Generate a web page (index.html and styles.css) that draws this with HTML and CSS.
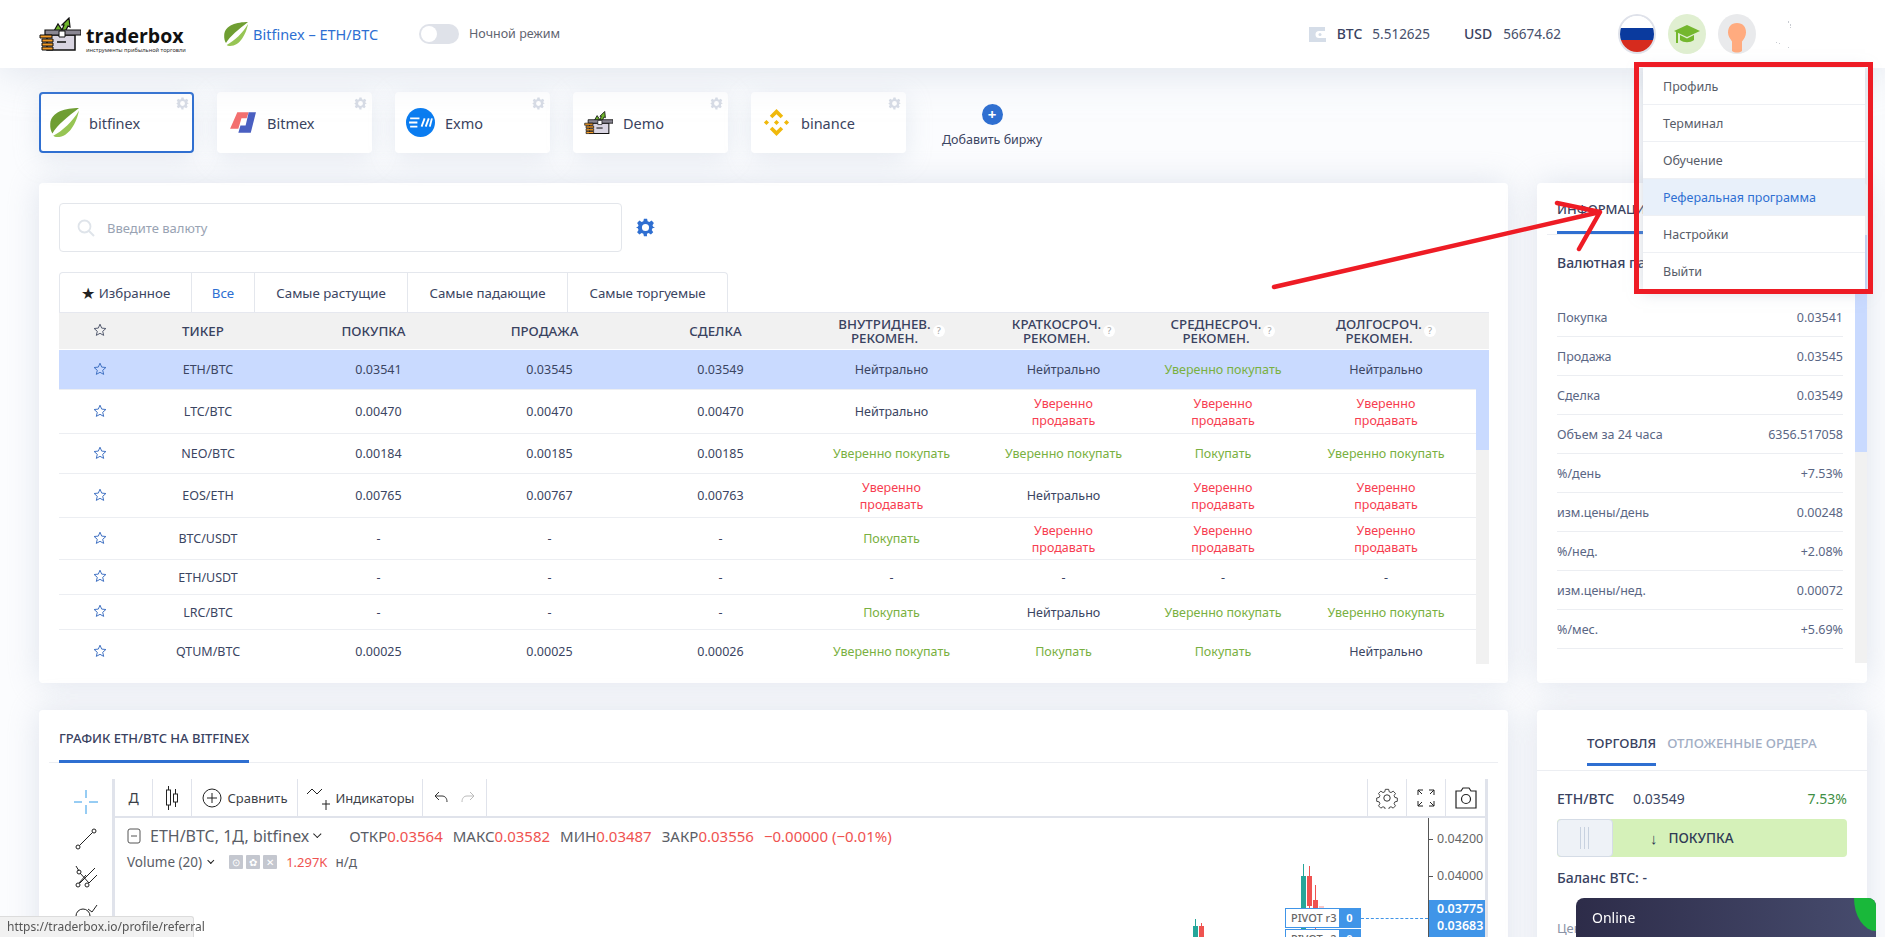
FILE: index.html
```html
<!DOCTYPE html>
<html lang="ru">
<head>
<meta charset="utf-8">
<title>Traderbox</title>
<link rel="stylesheet" href="styles.css">
</head>
<body>
<svg class="defs" width="0" height="0">
  <symbol id="leaf" viewBox="0 0 24 24">
    <path fill="#6f9e32" d="M24 0C13 0 1 3 .2 13c-.2 3.500.5 6 1.800 8 4-7 13-14 22-21z"/>
    <path fill="#97c554" d="M24 2C22 12 16 24 6 24c-1.500 0-2.500-.3-3.300-1C10 19 19 11 24 2z"/>
  </symbol>
  <symbol id="box" viewBox="0 0 42 34">
    <path fill="#6fb52c" stroke="#111" stroke-width="1.200" d="M15 14l4-7 4 6 2-5-2 0 7-7 1 9-2-1-4 8z"/>
    <path fill="#d9d5e2" stroke="#111" stroke-width="1.500" d="M8 18h28v15H8z"/>
    <path fill="#8a8793" stroke="#111" stroke-width="1.200" d="M6 13h36v5H6z"/>
    <path fill="#fff" stroke="#111" d="M20 14h6v6h-6z"/>
    <path fill="#f39a26" stroke="#111" d="M1 18h12v3H1zM3 22h11v3H3zM3 26h11v3H3zM3 30h11v3H3z"/>
    <path stroke="#111" stroke-width="1.500" d="M18 25h9"/>
  </symbol>
  <symbol id="gear" viewBox="0 0 24 24">
    <path fill="currentColor" fill-rule="evenodd" d="M10 1h4l.7 3.200 2.200.9L19.700 3.300l2.900 2.900-1.800 2.800.9 2.200L24 12l-3.200 1-.9 2.100 1.800 2.800-2.900 2.900-2.800-1.800-2.200.9L14 23h-4l-.7-3.100-2.200-.9-2.800 1.800-2.900-2.900L3.200 15l-.9-2.100L0 12l2.300-.8.9-2.200L1.400 6.200l2.900-2.900 2.800 1.800 2.200-.9zM12 7.500a4.500 4.500 0 100 9 4.500 4.500 0 000-9z"/>
  </symbol>
  <symbol id="star" viewBox="0 0 14 14">
    <path fill="none" stroke="currentColor" d="M7 1.200l1.700 3.900 4.200.4-3.200 2.800 1 4.100L7 10.300 3.300 12.400l1-4.100L1.100 5.500l4.200-.4z"/>
  </symbol>
</svg>

<header class="topbar">
  <div class="logo">
    <svg class="logo-icon"><use href="#box"/></svg>
    <div class="logo-text"><b>traderbox</b><small>инструменты прибыльной торговли</small></div>
  </div>
  <div class="pair">
    <svg class="pair-leaf"><use href="#leaf"/></svg>
    <span>Bitfinex – ETH/BTC</span>
  </div>
  <div class="switch"><i></i></div>
  <span class="night">Ночной режим</span>
  <div class="balances">
    <svg class="wallet" viewBox="0 0 18 15"><path fill="#d5dde8" d="M0 0h16v4H10a3.500 3.500 0 000 7h7v4H0z"/><circle cx="11" cy="7.500" r="1.500" fill="#d5dde8"/></svg>
    <b class="cur">BTC</b><span class="val">5.512625</span>
    <b class="cur usd">USD</b><span class="val">56674.62</span>
  </div>
  <div class="round flag"><i class="f1"></i><i class="f2"></i><i class="f3"></i></div>
  <div class="round cap">
    <svg viewBox="0 0 26 24" width="26" height="24"><path fill="#74b72e" d="M13 3L26 9l-13 6L0 9z"/><path fill="#74b72e" d="M6 13l7 3.500 7-3.500v5c-4 3-10 3-14 0z"/><path stroke="#74b72e" stroke-width="2" d="M3 10v11"/></svg>
  </div>
  <div class="round person">
    <svg viewBox="0 0 22 32" width="22" height="32"><path fill="#ffab7f" d="M11 1c6 0 9 4 9 9.500 0 3.500-2 6.500-4 9V29c-3 2-7 2-10 0v-9.500c-2-3-4-5.500-4-9C2 5 5 1 11 1z"/></svg>
  </div>
  <svg class="specks" viewBox="0 0 16 30" width="16" height="30"><path fill="#c9ccd2" d="M12 2h1v2h-1zM14 5h1v2h-1zM14 8h1v1h-1zM0 23h1v1H0zM3 24h1v1H3zM12 28h1v1h-1z"/></svg>
</header>

<main class="page">
  <section class="exchanges">
    <div class="ex active"><svg class="ex-ic"><use href="#leaf"/></svg><span>bitfinex</span><svg class="ex-gear"><use href="#gear"/></svg></div>
    <div class="ex">
      <svg class="ex-ic" viewBox="0 0 28 28"><path fill="#f36f6f" d="M9 4h11l-2 6h-5l-3 10H2z"/><path fill="#4a5fc1" d="M27 4l-5 20H10l2-7h5l3-13z"/></svg>
      <span>Bitmex</span><svg class="ex-gear"><use href="#gear"/></svg></div>
    <div class="ex">
      <svg class="ex-ic" viewBox="0 0 28 28"><circle cx="14" cy="14" r="14" fill="#0a7cf0"/><path stroke="#fff" stroke-width="1.800" fill="none" d="M4 10h9M3 14h8M4 18h7M15 18l3-8M19 18l3-8M23 18l2-8"/></svg>
      <span>Exmo</span><svg class="ex-gear"><use href="#gear"/></svg></div>
    <div class="ex"><svg class="ex-ic"><use href="#box"/></svg><span>Demo</span><svg class="ex-gear"><use href="#gear"/></svg></div>
    <div class="ex">
      <svg class="ex-ic" viewBox="2 0 24 26"><path fill="#f0b90b" d="M14 1l6 6-2.300 2.300L14 5.600l-3.700 3.700L8 7zM5 10.700L7.300 13 5 15.300 2.700 13zM23 10.700L25.300 13 23 15.300 20.700 13zM14 10.700l2.300 2.300L14 15.300 11.700 13zM8 19l2.300-2.300 3.700 3.700 3.700-3.700L20 19l-6 6z"/></svg>
      <span>binance</span><svg class="ex-gear"><use href="#gear"/></svg></div>
    <div class="add"><i>+</i><span>Добавить биржу</span></div>
  </section>

  <section class="row-top">
    <div class="card market">
      <div class="search-row">
        <div class="search">
          <svg viewBox="0 0 18 18" width="18" height="18"><circle cx="7.500" cy="7.500" r="6" fill="none" stroke="#dfe4ea" stroke-width="1.800"/><path stroke="#dfe4ea" stroke-width="2" d="M12 12l5 5"/></svg>
          <span>Введите валюту</span>
        </div>
        <svg class="search-gear"><use href="#gear"/></svg>
      </div>
      <div class="tabs">
        <div class="tab t1"><em>★</em> Избранное</div>
        <div class="tab t2 on">Все</div>
        <div class="tab t3">Самые растущие</div>
        <div class="tab t4">Самые падающие</div>
        <div class="tab t5">Самые торгуемые</div>
      </div>
      <div class="thead tr">
        <div class="c-star"><svg class="star dark"><use href="#star"/></svg></div>
        <div class="c-tick">ТИКЕР</div>
        <div class="hn">ПОКУПКА</div><div class="hn">ПРОДАЖА</div><div class="hn">СДЕЛКА</div>
        <div class="hq"><span>ВНУТРИДНЕВ.<br>РЕКОМЕН.</span><i>?</i></div>
        <div class="hq"><span>КРАТКОСРОЧ.<br>РЕКОМЕН.</span><i>?</i></div>
        <div class="hq"><span>СРЕДНЕСРОЧ.<br>РЕКОМЕН.</span><i>?</i></div>
        <div class="hq"><span>ДОЛГОСРОЧ.<br>РЕКОМЕН.</span><i>?</i></div>
      </div>
      <div class="tbody">
        <div class="rows">
          <div class="tr h40 sel"><div class="c-star"><svg class="star"><use href="#star"/></svg></div><div class="c-tick">ETH/BTC</div><div>0.03541</div><div>0.03545</div><div>0.03549</div><div>Нейтрально</div><div>Нейтрально</div><div class="g">Уверенно покупать</div><div>Нейтрально</div></div>
          <div class="tr h44"><div class="c-star"><svg class="star"><use href="#star"/></svg></div><div class="c-tick">LTC/BTC</div><div>0.00470</div><div>0.00470</div><div>0.00470</div><div>Нейтрально</div><div class="r">Уверенно<br>продавать</div><div class="r">Уверенно<br>продавать</div><div class="r">Уверенно<br>продавать</div></div>
          <div class="tr h40"><div class="c-star"><svg class="star"><use href="#star"/></svg></div><div class="c-tick">NEO/BTC</div><div>0.00184</div><div>0.00185</div><div>0.00185</div><div class="g">Уверенно покупать</div><div class="g">Уверенно покупать</div><div class="g">Покупать</div><div class="g">Уверенно покупать</div></div>
          <div class="tr h44"><div class="c-star"><svg class="star"><use href="#star"/></svg></div><div class="c-tick">EOS/ETH</div><div>0.00765</div><div>0.00767</div><div>0.00763</div><div class="r">Уверенно<br>продавать</div><div>Нейтрально</div><div class="r">Уверенно<br>продавать</div><div class="r">Уверенно<br>продавать</div></div>
          <div class="tr h42"><div class="c-star"><svg class="star"><use href="#star"/></svg></div><div class="c-tick">BTC/USDT</div><div>-</div><div>-</div><div>-</div><div class="g">Покупать</div><div class="r">Уверенно<br>продавать</div><div class="r">Уверенно<br>продавать</div><div class="r">Уверенно<br>продавать</div></div>
          <div class="tr h35"><div class="c-star"><svg class="star"><use href="#star"/></svg></div><div class="c-tick">ETH/USDT</div><div>-</div><div>-</div><div>-</div><div>-</div><div>-</div><div>-</div><div>-</div></div>
          <div class="tr h35"><div class="c-star"><svg class="star"><use href="#star"/></svg></div><div class="c-tick">LRC/BTC</div><div>-</div><div>-</div><div>-</div><div class="g">Покупать</div><div>Нейтрально</div><div class="g">Уверенно покупать</div><div class="g">Уверенно покупать</div></div>
          <div class="tr h44"><div class="c-star"><svg class="star"><use href="#star"/></svg></div><div class="c-tick">QTUM/BTC</div><div>0.00025</div><div>0.00025</div><div>0.00026</div><div class="g">Уверенно покупать</div><div class="g">Покупать</div><div class="g">Покупать</div><div>Нейтрально</div></div>
        </div>
        <div class="scroll"><i></i></div>
      </div>
    </div>

    <div class="card info">
      <div class="info-tab"><span>ИНФОРМАЦИЯ</span></div>
      <div class="info-body">
        <div class="info-list">
          <h4>Валютная пара</h4>
          <div class="kv"><span>Покупка</span><span>0.03541</span></div>
          <div class="kv"><span>Продажа</span><span>0.03545</span></div>
          <div class="kv"><span>Сделка</span><span>0.03549</span></div>
          <div class="kv"><span>Объем за 24 часа</span><span>6356.517058</span></div>
          <div class="kv"><span>%/день</span><span>+7.53%</span></div>
          <div class="kv"><span>изм.цены/день</span><span>0.00248</span></div>
          <div class="kv"><span>%/нед.</span><span>+2.08%</span></div>
          <div class="kv"><span>изм.цены/нед.</span><span>0.00072</span></div>
          <div class="kv"><span>%/мес.</span><span>+5.69%</span></div>
        </div>
        <div class="scroll info-scroll"><i></i></div>
      </div>
    </div>
  </section>

  <section class="row-bottom">
    <div class="card chart">
      <div class="chart-title"><span>ГРАФИК ETH/BTC НА BITFINEX</span></div>
      <div class="chart-body">
        <div class="tools">
          <svg viewBox="0 0 24 24" width="24" height="24"><path stroke="#2f9ae8" d="M12 0v8M12 15v9M0 12h8M15 12h9" fill="none"/></svg>
          <svg viewBox="0 0 24 24" width="24" height="24" fill="none" stroke="#222"><circle cx="20" cy="4" r="2"/><circle cx="4" cy="20" r="2"/><path d="M5.500 18.500l13-13"/></svg>
          <svg viewBox="0 0 24 24" width="24" height="24" fill="none" stroke="#222"><circle cx="4" cy="21" r="2"/><circle cx="13" cy="21" r="2"/><circle cx="5" cy="8" r="2"/><path d="M6 19L21 4M15 19l8-8M6 9l9 10M2 2l3 5M5 19l7-8"/></svg>
          <svg viewBox="0 0 24 24" width="24" height="24" fill="none" stroke="#222"><circle cx="9" cy="15" r="7"/><path d="M14 8l4 3 5-7"/></svg>
        </div>
        <div class="plot">
          <div class="tv-bar">
            <div class="tv-i w-d">Д</div>
            <div class="tv-i w-c"><svg viewBox="0 0 16 24" width="16" height="24" fill="none" stroke="#222"><path d="M4.500 0v24M11.500 3v18"/><rect x="2.500" y="4" width="4" height="15" fill="#fff"/><rect x="9.500" y="8" width="4" height="8" fill="#fff"/></svg></div>
            <div class="tv-i w-s"><svg viewBox="0 0 20 20" width="20" height="20" fill="none" stroke="#222"><circle cx="10" cy="10" r="9"/><path d="M10 5v10M5 10h10"/></svg><span>Сравнить</span></div>
            <div class="tv-i w-n"><svg viewBox="0 0 24 24" width="24" height="24" fill="none" stroke="#222"><path d="M1 8l5-5 5 5 5-5M16 18h8M20 14v10"/></svg><span>Индикаторы</span></div>
            <div class="tv-i w-u"><svg viewBox="0 0 16 16" width="16" height="16" fill="none" stroke="#333"><path d="M6 2L2 6l4 4M2 6h7c3 0 5 2 5 6"/></svg><svg viewBox="0 0 16 16" width="16" height="16" fill="none" stroke="#bbb"><path d="M10 2l4 4-4 4M14 6H7c-3 0-5 2-5 6"/></svg></div>
            <div class="tv-space"></div>
            <div class="tv-i w-r"><svg viewBox="0 0 24 24" width="22" height="22" fill="none" stroke="#222"><path d="M10 1.500h4l.7 3 2.200.9 2.600-1.700 2.800 2.800-1.700 2.600.9 2.200 3 .7v4l-3 .7-.9 2.200 1.700 2.600-2.800 2.800-2.600-1.700-2.200.9-.7 3h-4l-.7-3-2.200-.9-2.600 1.700-2.800-2.800 1.700-2.600-.9-2.200-3-.7v-4l3-.7.9-2.200-1.700-2.600 2.800-2.800 2.600 1.700 2.200-.9z" transform="translate(1.200 1.200) scale(.9)"/><circle cx="12" cy="12" r="3.500"/></svg></div>
            <div class="tv-i w-r"><svg viewBox="0 0 18 18" width="18" height="18" fill="none" stroke="#222"><path d="M1 6V1h5M12 1h5v5M17 12v5h-5M6 17H1v-5M1 1l4 4M17 1l-4 4M17 17l-4-4M1 17l4-4"/></svg></div>
            <div class="tv-i w-r last"><svg viewBox="0 0 22 22" width="22" height="22" fill="none" stroke="#222" stroke-width="1.200"><path d="M1 4h5l2-3h6l2 3h5v17H1z"/><circle cx="11" cy="12" r="4.500"/></svg></div>
          </div>
          <div class="canvas">
            <div class="legend">
              <div class="leg1">
                <svg viewBox="0 0 14 16" width="14" height="16" fill="none" stroke="#555"><rect x="1" y="1" width="12" height="14" rx="2"/><path d="M4 8h6"/></svg>
                <span class="sym">ETH/BTC, 1Д, bitfinex</span><span class="chev"></span>
                <span class="ohlc">ОТКР<u>0.03564</u></span><span class="ohlc">МАКС<u>0.03582</u></span><span class="ohlc">МИН<u>0.03487</u></span><span class="ohlc">ЗАКР<u>0.03556</u></span><span class="ohlc"><u>−0.00000 (−0.01%)</u></span>
              </div>
              <div class="leg2">
                <span class="vol">Volume (20)</span><span class="chev small"></span>
                <i class="mini">⊙</i><i class="mini">✿</i><i class="mini">✕</i>
                <u>1.297K</u><span class="nd">н/д</span>
              </div>
            </div>
            <svg class="candles" viewBox="0 0 200 130" width="200" height="130">
              <path stroke="#26a69a" d="M179.500 46v70M71.500 101v20"/>
              <path stroke="#ef5350" d="M185.500 48v60M191.500 67v60M77.500 105v20"/>
              <rect x="177" y="58" width="5" height="60" fill="#26a69a"/>
              <rect x="183" y="58" width="5" height="30" fill="#ef5350"/>
              <rect x="189" y="82" width="5" height="18" fill="#ef5350"/>
              <rect x="69" y="108" width="5" height="22" fill="#26a69a"/>
              <rect x="75" y="108" width="5" height="22" fill="#ef5350"/>
              <rect x="195" y="88" width="5" height="12" fill="#f9c9c9"/>
            </svg>
            <div class="pivot p1"><span>PIVOT r3</span><b>0</b></div>
            <div class="pivot p2"><span>PIVOT r2</span><b>0</b></div>
            <div class="axis">
              <div class="tick t-a">0.04200</div>
              <div class="tick t-b">0.04000</div>
              <div class="axis-blue"><div>0.03775</div><div>0.03683</div></div>
            </div>
          </div>
        </div>
      </div>
    </div>

    <div class="card trade">
      <div class="trade-tabs"><span class="tt on">ТОРГОВЛЯ</span><span class="tt">ОТЛОЖЕННЫЕ ОРДЕРА</span></div>
      <div class="trade-body">
        <div class="trade-top"><b>ETH/BTC</b><span>0.03549</span><em>7.53%</em></div>
        <div class="slider"><div class="handle"><i></i></div><div class="buy"><span class="arrow">↓</span>ПОКУПКА</div></div>
        <div class="bal">Баланс BTC: -</div>
        <div class="price-l">Цена</div>
      </div>
    </div>
  </section>
</main>

<nav class="menu">
  <a>Профиль</a><a>Терминал</a><a>Обучение</a><a class="hover">Реферальная программа</a><a>Настройки</a><a>Выйти</a>
</nav>
<div class="red-box"></div>
<svg class="red-arrow" viewBox="0 0 360 100" width="360" height="100"><path d="M3 87L329 12M286 3l43 9-21 37" fill="none" stroke="#ee1c25" stroke-width="4.500" stroke-linecap="round" stroke-linejoin="round"/></svg>
<div class="online"><span>Online</span><i></i></div>
<div class="status">https://traderbox.io/profile/referral</div>
</body>
</html>
```
FILE: styles.css
```css
* { box-sizing: border-box; }
html, body { margin: 0; height: 100%; overflow: hidden; }
body {
  background: #fbfcfe;
  font: 13px/20px "Noto Sans", "Open Sans", sans-serif;
  color: #3b4562;
}
.defs { position: absolute; }
i, em, u { font-style: normal; text-decoration: none; }

/* top bar */
.topbar {
  height: 68px;
  background: #fff;
  display: flex;
  align-items: center;
  padding-left: 39px;
  position: relative;
  z-index: 2;
  box-shadow: 0 0 45px rgba(190, 200, 215, .55);
}
.logo { display: flex; align-items: center; width: 185px; }
.logo-icon { width: 42px; height: 34px; }
.logo-text { margin-left: 5px; display: flex; flex-direction: column; margin-top: 12px; }
.logo-text b { font: 700 19.500px/20px "Open Sans", sans-serif; color: #111; }
.logo-text small { font-size: 5.700px; line-height: 8px; color: #333; white-space: nowrap; }
.pair { display: flex; align-items: center; color: #2e6fd2; font-size: 14.500px; }
.pair-leaf { width: 24px; height: 24px; margin-right: 5px; }
.switch { width: 40px; height: 20px; background: #dfe2e9; border-radius: 10px; margin-left: 41px; padding: 2px; }
.switch i { display: block; width: 16px; height: 16px; background: #fff; border-radius: 50%; }
.night { margin-left: 10px; font-size: 12.500px; color: #5f6470; }
.balances { display: flex; align-items: center; margin-left: auto; font-size: 13.500px; color: #47506b; }
.wallet { width: 18px; height: 15px; margin-right: 10px; }
.cur { font-weight: 500; font-size: 14px; margin-right: 10px; color: #39425f; }
.usd { margin-left: 34px; margin-right: 11px; }
.val { white-space: nowrap; }
.round { width: 38px; height: 40px; border-radius: 50%; margin-left: 12px; display: flex; align-items: center; justify-content: center; overflow: hidden; flex: none; }
.flag { flex-direction: column; align-items: stretch; margin-left: 57px; border: 2px solid #dfe2ea; }
.flag i { flex: 1; }
.f1 { background: #fff; }
.f2 { background: #0a3a9e; }
.f3 { background: #d62b1e; }
.cap { background: #e0efd1; }
.person { background: #e9eaec; align-items: flex-end; }
.specks { margin: 0 93px 0 20px; flex: none; }

.page { padding: 24px 18px 0 39px; }

/* exchanges */
.exchanges { display: flex; gap: 23px; height: 61px; }
.ex {
  width: 155px;
  height: 61px;
  background: #fff;
  border-radius: 4px;
  display: flex;
  align-items: center;
  padding-left: 11px;
  position: relative;
  font-size: 14.500px;
  color: #3a4360;
  box-shadow: 0 6px 25px rgba(190, 200, 215, .35);
}
.ex.active { border: 2px solid #2f6fd1; padding-left: 9px; }
.ex-ic { width: 29px; height: 29px; margin-right: 10px; }
.ex-gear { position: absolute; top: 5px; right: 5px; width: 13px; height: 13px; color: #d7dce6; }
.ex.active .ex-gear { top: 3px; right: 3px; }
.add { display: flex; flex-direction: column; align-items: center; margin-left: 13px; margin-top: 12px; font-size: 12.500px; color: #3b4562; white-space: nowrap; }
.add i { width: 21px; height: 21px; border-radius: 50%; background: #2f6fd1; color: #fff; text-align: center; font: bold 15px/20px "Noto Sans", sans-serif; margin-bottom: 5px; }

/* cards */
.card { background: #fff; border-radius: 4px; box-shadow: 0 0 32px rgba(190, 200, 215, .45); }
.row-top { display: flex; gap: 29px; margin-top: 30px; height: 500px; }
.row-bottom { display: flex; gap: 29px; margin-top: 27px; height: 500px; }
.market { width: 1469px; padding: 20px 19px 0 20px; }
.info { width: 330px; }

.search-row { display: flex; align-items: center; height: 49px; }
.search { width: 563px; height: 49px; border: 1px solid #e3e6eb; border-radius: 4px; display: flex; align-items: center; padding-left: 17px; gap: 12px; color: #99a3b3; font-size: 13px; }
.search-gear { width: 19px; height: 19px; color: #2f6fd1; margin-left: 14px; }

.tabs { display: flex; margin-top: 20px; height: 40px; }
.tab { border: 1px solid #e4e7ed; border-left: 0; border-bottom: 0; display: flex; align-items: center; justify-content: center; gap: 4px; font-size: 13.300px; color: #3b4562; white-space: nowrap; }
.t1 { width: 133px; border-left: 1px solid #e4e7ed; border-top-left-radius: 4px; }
.t1 em { color: #222; font-size: 16px; }
.t2 { width: 63px; color: #2e6fd2; }
.t3 { width: 153px; }
.t4 { width: 160px; }
.t5 { width: 160px; border-top-right-radius: 4px; }

.tr {
  display: grid;
  grid-template-columns: 82px 152px 171px 171px 171px 171px 173px 146px 180px;
  align-items: center;
  text-align: center;
  font-size: 12.500px;
  line-height: 17px;
}
.thead { width: 1430px; height: 37px; background: #f1f1f1; border-top: 1px solid #e6e8ef; color: #39425f; font-weight: 500; font-size: 13.300px; line-height: 14px; }
.thead .c-tick { padding-right: 28px; }
.c-star { display: flex; justify-content: center; margin: -2px 0 0 -1px; }
.c-tick { padding-right: 18px; }
.hn { padding-right: 10px; }
.hq { display: flex; align-items: center; justify-content: center; gap: 2px; }
.hq i { width: 12px; height: 12px; border-radius: 50%; background: #fff; color: #aaa; font-size: 9px; line-height: 12px; }
.star { width: 14px; height: 14px; color: #4273c4; }
.star.dark { color: #555c70; }

.tbody { display: flex; width: 1430px; height: 314px; margin-top: 1px; overflow: hidden; }
.rows { width: 1417px; flex: none; }
.rows .tr { border-bottom: 1px solid #eceef2; }
.h40 { height: 40px; }
.h44 { height: 44px; }
.h42 { height: 42px; }
.h35 { height: 35px; }
.sel { background: #c9daff; }
.g { color: #79b041; }
.r { color: #f73d50; }
.scroll { width: 13px; background: #f1f1f1; flex: none; }
.scroll i { display: block; height: 100px; background: #c9daff; }

/* info */
.info-tab { height: 52px; margin: 0 12px 0 10px; border-bottom: 1px solid #eceef2; padding: 16px 0 0 10px; }
.info-tab span { display: inline-block; height: 35px; border-bottom: 3px solid #2f6fd1; font-size: 13px; padding-right: 14px; font-weight: 500; color: #39425f; }
.info-body { display: flex; height: 428px; overflow: hidden; }
.info-list { width: 318px; height: 428px; padding: 0 12px 0 20px; }
.info-list h4 { margin: 18px 0 25px; font-size: 14px; line-height: 20px; font-weight: 500; color: #39425f; }
.kv { display: flex; justify-content: space-between; height: 39px; padding-top: 10px; border-bottom: 1px solid #eceef2; font-size: 12.500px; color: #5a6684; }
.info-scroll { width: 12px; }
.info-scroll i { height: 217px; }

/* chart */
.chart { width: 1469px; padding: 0 10px; }
.chart-title { height: 53px; padding: 18px 0 0 10px; border-bottom: 1px solid #eceef2; }
.chart-title span { display: inline-block; height: 35px; border-bottom: 3px solid #2f6fd1; font-size: 13px; color: #39425f; font-weight: 500; }
.chart-body { display: flex; margin: 16px 10px 0 10px; height: 400px; }
.tools { width: 53px; display: flex; flex-direction: column; align-items: center; gap: 13px; padding-top: 11px; }
.plot { flex: 1; border-left: 3px solid #e0e3eb; border-right: 3px solid #e0e3eb; }
.tv-bar { display: flex; height: 39px; border-bottom: 2px solid #e0e3eb; color: #3c3f48; font-size: 13px; }
.tv-i { display: flex; align-items: center; justify-content: center; gap: 6px; border-right: 1px solid #e0e3eb; height: 37px; white-space: nowrap; }
.w-d { width: 38px; font-size: 14px; }
.w-c { width: 39px; }
.w-s { width: 106px; }
.w-n { width: 125px; }
.w-u { width: 64px; gap: 11px; }
.tv-space { flex: 1; border-right: 1px solid #e0e3eb; height: 37px; }
.w-r { width: 39px; }
.w-r.last { border-right: 0; }
.canvas { position: relative; height: 300px; overflow: hidden; }
.legend { padding: 7px 0 0 12px; }
.leg1 { display: flex; align-items: center; height: 22px; color: #5a5d66; font-size: 15px; line-height: 22px; }
.sym { margin-left: 9px; font-size: 16px; }
.chev { width: 6px; height: 6px; border-right: 1.500px solid #222; border-bottom: 1.500px solid #222; transform: rotate(45deg) translate(-2px, -1px); margin: 0 28px 0 6px; }
.ohlc { margin-right: 10px; white-space: nowrap; }
.ohlc u, .leg2 u { color: #ef5350; }
.leg2 { display: flex; align-items: center; height: 20px; margin-top: 5px; font-size: 13.500px; color: #5a5d66; }
.chev.small { width: 5px; height: 5px; margin: 0 15px 0 7px; }
.mini { width: 14px; height: 14px; background: #c4c7cf; color: #fff; font-size: 10px; line-height: 14px; text-align: center; margin-right: 3px; border-radius: 1px; }
.leg2 u { margin-left: 6px; font-size: 13px; }
.nd { margin-left: 8px; }
.candles { position: absolute; left: 1009px; top: 0; }
.pivot { position: absolute; left: 1170px; display: flex; width: 76px; height: 20px; border: 1px solid #4095e8; background: #fff; font-size: 11px; font-weight: 500; color: #666; line-height: 18px; white-space: nowrap; }
.pivot span { flex: 1; padding-left: 5px; }
.pivot b { width: 21px; background: #4095e8; color: #fff; text-align: center; }
.pivot::after { content: ""; position: absolute; left: 75px; top: 9px; width: 67px; border-top: 1px dashed #4095e8; }
.p1 { top: 90px; }
.p2 { top: 111px; }
.axis { position: absolute; right: 0; top: 0; bottom: 0; width: 57px; border-left: 1px solid #555; font-size: 12.500px; color: #666; }
.tick { position: absolute; left: 8px; }
.tick::before { content: ""; position: absolute; left: -8px; top: 10px; width: 4px; border-top: 1px solid #555; }
.t-a { top: 11px; }
.t-b { top: 48px; }
.axis-blue { position: absolute; top: 82px; left: 0; right: 0; bottom: 0; background: #4095e8; color: #fff; font-weight: 600; padding-left: 8px; }
.axis-blue div { height: 17px; line-height: 17px; }

/* trade */
.trade { width: 330px; }
.trade-tabs { height: 61px; border-bottom: 1px solid #eceef2; padding: 23px 0 0 50px; display: flex; gap: 11px; font-size: 13.300px; }
.tt { color: #a2aec4; white-space: nowrap; height: 33px; font-weight: 500; }
.tt.on { color: #39425f; border-bottom: 3px solid #2f6fd1; }
.trade-body { padding: 18px 20px 0 20px; }
.trade-top { display: flex; align-items: center; }
.trade-top b { font-weight: 500; font-size: 14px; color: #39425f; width: 76px; }
.trade-top span { font-size: 14px; }
.trade-top em { margin-left: auto; color: #3f8f45; font-size: 14px; }
.slider { display: flex; margin-top: 10px; height: 38px; background: #d5f1b9; border-radius: 4px; overflow: hidden; }
.handle { width: 56px; background: #eef2f7; border: 1px solid #d5dce6; border-radius: 4px; display: flex; align-items: center; justify-content: center; }
.handle i { width: 10px; height: 22px; background: repeating-linear-gradient(90deg, #c8d2e0 0 1px, transparent 1px 4px); }
.buy { padding-left: 37px; display: flex; align-items: center; font-size: 13.500px; color: #2f3a55; font-weight: 500; }
.arrow { margin-right: 11px; font-size: 15px; }
.bal { margin-top: 11px; font-size: 14px; font-weight: 500; color: #39425f; }
.price-l { margin-top: 30px; color: #8a93a6; font-size: 13px; }

/* overlays */
.menu { position: absolute; left: 1643px; top: 68px; width: 222px; background: #fff; z-index: 5; box-shadow: 0 2px 14px rgba(170, 180, 195, .5); display: flex; flex-direction: column; }
.menu a { height: 37px; line-height: 37px; padding-left: 20px; font-size: 12.500px; color: #575c68; border-bottom: 1px solid #eef0f4; }
.menu a:last-child { border-bottom: 0; }
.menu .hover { background: #e8f0fa; color: #2e6fd2; }
.red-box { position: absolute; left: 1634px; top: 62px; width: 239px; height: 232px; border: 5px solid #ee1c25; z-index: 6; }
.red-arrow { position: absolute; left: 1271px; top: 200px; z-index: 6; }
.online { position: fixed; left: 1576px; top: 898px; width: 300px; height: 60px; background: linear-gradient(90deg, #2d2c49, #474c6e); border-radius: 8px 8px 0 0; color: #fff; padding: 10px 16px; font-size: 14px; z-index: 7; overflow: hidden; }
.online i { position: absolute; right: 0; top: 0; width: 22px; height: 33px; background: #19b83a; border-radius: 0 0 0 100%; }
.status { position: fixed; left: 0; bottom: 0; height: 21px; width: 194px; background: #f1f1f1; border: 1px solid #dcdcdc; border-left: 0; border-bottom: 0; border-top-right-radius: 3px; padding-left: 7px; font-size: 12px; line-height: 20px; color: #555; z-index: 8; white-space: nowrap; }
```
